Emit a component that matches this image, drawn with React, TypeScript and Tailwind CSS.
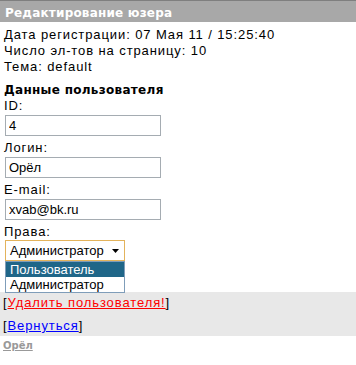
export default function App() {
  return (
    <div className="w-[356px] h-[365px] bg-white text-black text-[13px] leading-[16px] tracking-[0.9px] font-['Liberation_Sans',Arial,sans-serif]">
      <div className="h-[22px] border-t border-[#7f7f7f] bg-[#a8a8a8] pt-[4px] pl-[5px] text-[12px] leading-[16px] tracking-[0.2px] font-bold text-white font-['DejaVu_Sans',Verdana,sans-serif]">
        Редактирование юзера
      </div>

      <div className="pt-[5px] pl-[4px]">
        <div>Дата регистрации: 07 Мая 11 / 15:25:40</div>
        <div>Число эл-тов на страницу: 10</div>
        <div>Тема: default</div>

        <div className="mt-[7px] text-[12px] tracking-[0.3px] font-bold font-['DejaVu_Sans',Verdana,sans-serif]">
          Данные пользователя
        </div>

        <div>ID:</div>
        <input
          readOnly
          value="4"
          className="ml-[1px] mt-[1px] mb-[4px] block h-[21px] w-[156px] border border-[#a5acb2] px-[3px] text-[13px] tracking-normal outline-none"
        />
        <div>Логин:</div>
        <input
          readOnly
          value="Орёл"
          className="ml-[1px] mt-[1px] mb-[4px] block h-[21px] w-[156px] border border-[#a5acb2] px-[3px] text-[13px] tracking-normal outline-none"
        />
        <div>E-mail:</div>
        <input
          readOnly
          value="xvab@bk.ru"
          className="ml-[1px] mt-[1px] mb-[4px] block h-[21px] w-[156px] border border-[#a5acb2] px-[3px] text-[13px] tracking-normal outline-none"
        />
        <div>Права:</div>

        <div className="relative ml-[1px] w-[120px] text-[13px] tracking-normal">
          <div className="flex h-[21px] items-center justify-between border border-[#e3b35c] bg-white pl-[4px] pr-[5px]">
            <span>Администратор</span>
            <svg width="7" height="4" viewBox="0 0 7 4">
              <path d="M0 0h7L3.5 4z" fill="#000" />
            </svg>
          </div>
          <div className="h-[31px]" />
          <ul className="absolute left-0 top-[21px] z-10 w-[120px] border border-[#7f9db9] bg-white">
            <li className="h-[15px] bg-[#1f6688] pl-[4px] leading-[15px] text-white">Пользователь</li>
            <li className="h-[15px] pl-[4px] leading-[15px]">Администратор</li>
          </ul>
        </div>
      </div>

      <div className="bg-[#e8e8e8] px-[3px] pt-[3px] pb-[2px]">
        <p>
          [<a href="#" className="text-[#ff0000] underline">Удалить пользователя!</a>]
        </p>
        <p className="mt-[7px]">
          [<a href="#" className="text-[#0000ff] underline">Вернуться</a>]
        </p>
      </div>

      <div className="pl-[3px] pt-[3px] text-[10px] leading-[14px] tracking-normal font-bold font-['DejaVu_Sans',Verdana,sans-serif]">
        <a href="#" className="text-[#999999] underline">
          Орёл
        </a>
      </div>
    </div>
  );
}
